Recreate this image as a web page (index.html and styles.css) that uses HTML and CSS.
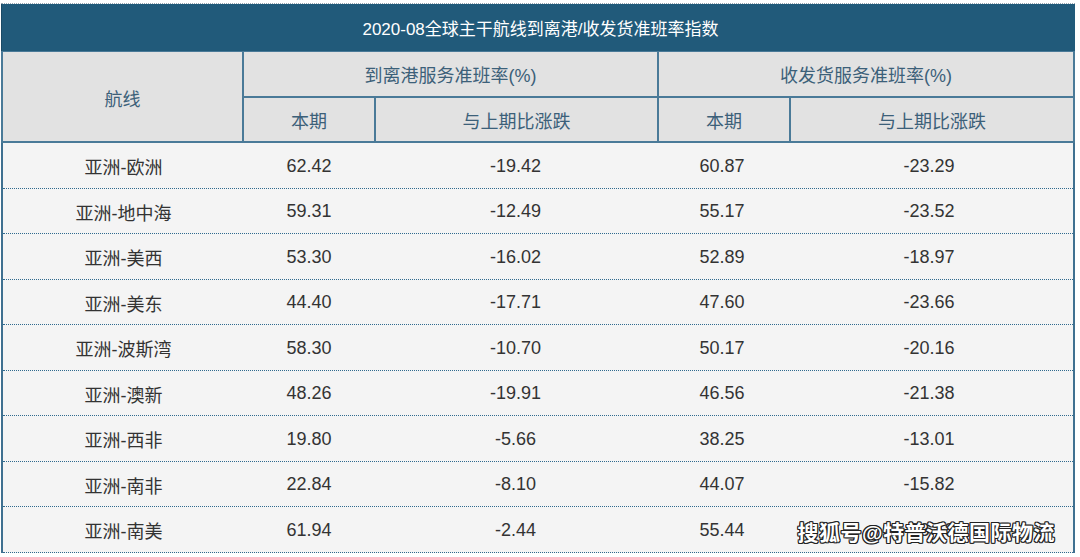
FILE: index.html
```html
<!DOCTYPE html>
<html lang="zh-CN">
<head>
<meta charset="utf-8">
<title>2020-08全球主干航线到离港/收发货准班率指数</title>
<link rel="stylesheet" href="styles.css">
</head>
<body>
<div class="sheet">
  <div class="title">2020-08全球主干航线到离港/收发货准班率指数</div>
  <div class="head">
    <div class="hc route">航线</div>
    <div class="hc grp1">到离港服务准班率(%)</div>
    <div class="hc grp2">收发货服务准班率(%)</div>
    <div class="hc">本期</div>
    <div class="hc">与上期比涨跌</div>
    <div class="hc">本期</div>
    <div class="hc">与上期比涨跌</div>
  </div>
  <div class="body">
    <div class="row"><span>亚洲-欧洲</span><span>62.42</span><span>-19.42</span><span>60.87</span><span>-23.29</span></div>
    <div class="row"><span>亚洲-地中海</span><span>59.31</span><span>-12.49</span><span>55.17</span><span>-23.52</span></div>
    <div class="row"><span>亚洲-美西</span><span>53.30</span><span>-16.02</span><span>52.89</span><span>-18.97</span></div>
    <div class="row"><span>亚洲-美东</span><span>44.40</span><span>-17.71</span><span>47.60</span><span>-23.66</span></div>
    <div class="row"><span>亚洲-波斯湾</span><span>58.30</span><span>-10.70</span><span>50.17</span><span>-20.16</span></div>
    <div class="row"><span>亚洲-澳新</span><span>48.26</span><span>-19.91</span><span>46.56</span><span>-21.38</span></div>
    <div class="row"><span>亚洲-西非</span><span>19.80</span><span>-5.66</span><span>38.25</span><span>-13.01</span></div>
    <div class="row"><span>亚洲-南非</span><span>22.84</span><span>-8.10</span><span>44.07</span><span>-15.82</span></div>
    <div class="row"><span>亚洲-南美</span><span>61.94</span><span>-2.44</span><span>55.44</span><span>-23.18</span></div>
  </div>
  <div class="watermark">搜狐号@特普沃德国际物流</div>
</div>
</body>
</html>
```

FILE: styles.css
```css
* { box-sizing: border-box; }
html, body { margin: 0; padding: 0; background: #ffffff; }
body {
  font-family: "Liberation Sans", "Noto Sans CJK SC", sans-serif;
  width: 1080px;
  height: 557px;
  overflow: hidden;
}
.sheet {
  position: relative;
  margin: 3px 0 0 1px;
  width: 1074px;
  border-top: 1px dotted #9aa9b4;
}
.title {
  height: 47px;
  background: #215a7a;
  border-left: 1px solid #1b4a66;
  color: #ffffff;
  font-size: 17px;
  display: flex;
  align-items: center;
  justify-content: center;
  padding-left: 4px;
}
.head {
  display: grid;
  grid-template-columns: 239px 130px 281px 130px 282px;
  grid-template-rows: 44px 43px;
  gap: 2px;
  padding: 1px 2px 2px 2px;
  background: #4a7a98;
}
.hc {
  background: #e2e2e2;
  color: #3c6079;
  font-size: 18px;
  display: flex;
  align-items: center;
  justify-content: center;
}
.route { grid-row: 1 / 3; grid-column: 1; padding-top: 2px; }
.grp1 { grid-column: 2 / 4; }
.grp2 { grid-column: 4 / 6; }
.body {
  border-left: 2px solid #3f7090;
  border-right: 2px solid #3f7090;
  background: #f4f4f4;
}
.row {
  display: grid;
  grid-template-columns: 241px 130px 283px 130px 284px;
  height: 45.5px;
  border-bottom: 1px dotted #2f6a8e;
  color: #333333;
  font-size: 18px;
}
.row span {
  display: flex;
  align-items: center;
  justify-content: center;
  padding-top: 2px;
}
.row span:first-child { padding-right: 0; }
.watermark {
  position: absolute;
  right: 20px;
  bottom: 7px;
  font-size: 21px;
  font-weight: 700;
  color: #ffffff;
  letter-spacing: 0.5px;
  text-shadow: -1px -1px 0 #222, 1px -1px 0 #222, -1px 1px 0 #222, 1px 1px 0 #222, 0 1px 0 #222, 1px 0 0 #222, 0 -1px 0 #222, -1px 0 0 #222;
}
```
